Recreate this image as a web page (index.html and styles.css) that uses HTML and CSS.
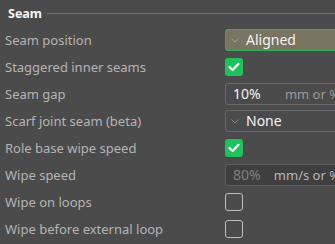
FILE: index.html
```html
<!DOCTYPE html>
<html>
<head>
<meta charset="utf-8">
<link rel="stylesheet" href="styles.css">
</head>
<body>
<div class="panel">
  <div class="header"><span class="title">Seam</span><span class="rule"></span></div>
  <div class="row">
    <span class="label">Seam position</span>
    <div class="select active"><svg class="chev" width="8" height="5" viewBox="0 0 8 5"><path d="M0.5 0.5 L4 4 L7.5 0.5" fill="none" stroke="#a5a290" stroke-width="1"/></svg><span class="val">Aligned</span></div>
  </div>
  <div class="row">
    <span class="label">Staggered inner seams</span>
    <span class="check on"><svg width="12" height="10" viewBox="0 0 12 10"><path d="M1.5 5 L4.6 8 L10.5 1.8" fill="none" stroke="#fff" stroke-width="2.2" stroke-linecap="round" stroke-linejoin="round"/></svg></span>
  </div>
  <div class="row">
    <span class="label">Seam gap</span>
    <div class="input"><span class="val">10%</span><span class="unit">mm or %</span></div>
  </div>
  <div class="row">
    <span class="label">Scarf joint seam (beta)</span>
    <div class="select"><svg class="chev" width="8" height="5" viewBox="0 0 8 5"><path d="M0.5 0.5 L4 4 L7.5 0.5" fill="none" stroke="#8e8e8e" stroke-width="1"/></svg><span class="val">None</span></div>
  </div>
  <div class="row">
    <span class="label">Role base wipe speed</span>
    <span class="check on"><svg width="12" height="10" viewBox="0 0 12 10"><path d="M1.5 5 L4.6 8 L10.5 1.8" fill="none" stroke="#fff" stroke-width="2.2" stroke-linecap="round" stroke-linejoin="round"/></svg></span>
  </div>
  <div class="row">
    <span class="label">Wipe speed</span>
    <div class="input disabled"><span class="val">80%</span><span class="unit">mm/s or %</span></div>
  </div>
  <div class="row">
    <span class="label">Wipe on loops</span>
    <span class="check"></span>
  </div>
  <div class="row">
    <span class="label">Wipe before external loop</span>
    <span class="check"></span>
  </div>
</div>
</body>
</html>
```
FILE: styles.css
```css
html, body {
  margin: 0;
  padding: 0;
  background: #4b4b4b;
  overflow: hidden;
  width: 335px;
  height: 244px;
}
.panel {
  font-family: "Noto Sans", "Open Sans", sans-serif;
  font-size: 13px;
  color: #b4b4b4;
  width: 400px;
}
.header {
  height: 26px;
  display: flex;
  align-items: center;
  padding-left: 8px;
  gap: 5px;
}
.title {
  color: #f4f4f4;
  font-weight: bold;
  font-size: 12.5px;
}
.rule {
  flex: 1;
  height: 1px;
  background: #727272;
}
.row {
  height: 27px;
  display: grid;
  grid-template-columns: 220px auto;
  align-items: center;
  padding-left: 5px;
}
.label {
  white-space: nowrap;
}
.select, .input {
  box-sizing: border-box;
  width: 122px;
  height: 22px;
  border: 1px solid #6a6a6a;
  border-radius: 3px;
  display: flex;
  align-items: center;
  color: #f2f2f2;
  font-size: 14px;
}
.select {
  padding-left: 5px;
  gap: 7px;
}
.select.active {
  border-color: #2fae56;
  background: #797563;
}
.chev {
  margin-top: 1px;
}
.input {
  padding: 0 6px 0 7px;
  justify-content: space-between;
}
.unit {
  color: #9a9a9a;
  font-size: 13px;
}
.input.disabled {
  background: #3f3f3f;
  border-color: #5e5e5e;
}
.input.disabled .val {
  color: #7f7f7f;
}
.input.disabled .unit {
  color: #b6b6b6;
}
.check {
  box-sizing: border-box;
  width: 18px;
  height: 18px;
  border-radius: 3px;
  border: 1.5px solid #bdbdbd;
  display: flex;
  align-items: center;
  justify-content: center;
}
.check.on {
  border: none;
  background: #1ec15b;
}
```
